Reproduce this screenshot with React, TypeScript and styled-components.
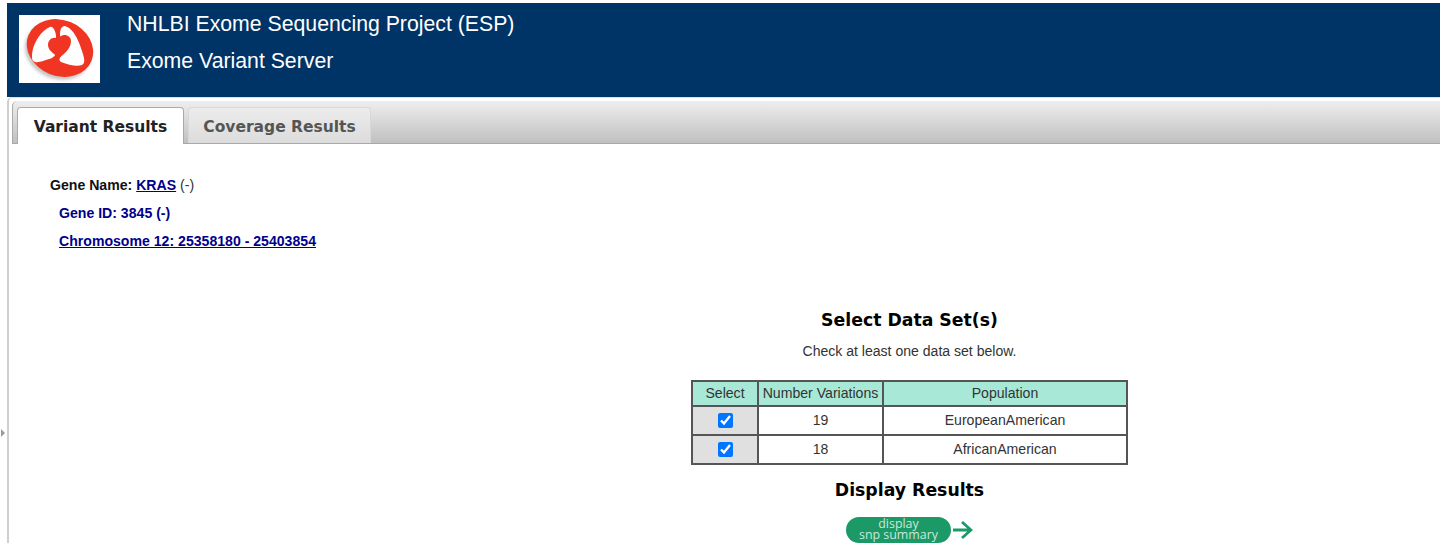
import React from "react"
import styled, {createGlobalStyle} from "styled-components"

const GlobalStyle = createGlobalStyle`
  html, body {
    margin: 0;
    padding: 0;
    height: 543px;
    overflow: hidden;
    background: #ffffff;
    font-family: "Liberation Sans", Arial, sans-serif;
  }
`

const Page = styled.div`
  display: flex;
  flex-direction: row;
  width: 1440px;
  height: 543px;
  overflow: hidden;
`

const Toggler = styled.div`
  width: 7px;
  flex-shrink: 0;
  position: relative;
`

const TogglerArrow = styled.span`
  position: absolute;
  left: 1px;
  top: 429px;
  width: 0;
  height: 0;
  border-top: 4px solid transparent;
  border-bottom: 4px solid transparent;
  border-left: 4px solid #9a9a9a;
`

const Main = styled.div`
  flex: 1;
  min-width: 0;
  display: flex;
  flex-direction: column;
  padding-top: 3px;
`

const Header = styled.header`
  height: 94px;
  background: #003366;
  display: flex;
  flex-direction: row;
  align-items: flex-start;
  flex-shrink: 0;
`

const LogoBox = styled.div`
  width: 81px;
  height: 68px;
  margin: 12px 0 0 12px;
  background: #ffffff;
  flex-shrink: 0;
`

const TitleBlock = styled.div`
  margin-left: 27px;
  padding-top: 8px;
  display: flex;
  flex-direction: column;
  gap: 10px;
`

const Title = styled.div`
  font-size: 21.25px;
  line-height: 27px;
  color: #ffffff;
`

const Pane = styled.div`
  flex: 1;
  border-left: 2px solid #cfcfcf;
  border-top: 1px solid #dddddd;
  border-top-left-radius: 5px;
`

const TabBar = styled.div`
  margin: 3px 0 0 3px;
  height: 43px;
  box-sizing: border-box;
  padding: 6px 0 0 4px;
  display: flex;
  flex-direction: row;
  gap: 4px;
  background: linear-gradient(#eeeeee, #c0c0c0);
  border-left: 1px solid #aaaaaa;
  border-bottom: 1px solid #a8a8a8;
  border-top-left-radius: 5px;
`

const Tab = styled.div<{$active?: boolean}>`
  height: ${p => (p.$active ? "37px" : "36px")};
  box-sizing: border-box;
  padding: 2px 0 0;
  display: flex;
  align-items: center;
  justify-content: center;
  width: ${p => (p.$active ? "167px" : "183px")};
  font-family: "DejaVu Sans", Verdana, sans-serif;
  font-size: 15.5px;
  font-weight: 700;
  color: ${p => (p.$active ? "#222222" : "#555555")};
  background: ${p => (p.$active ? "#ffffff" : "linear-gradient(#ececec, #dcdcdc)")};
  border: 1px solid ${p => (p.$active ? "#aaaaaa" : "#d8d8d8")};
  border-bottom: none;
  border-radius: 4px 4px 0 0;
`

const Content = styled.div`
  display: flex;
  flex-direction: column;
`

const GeneBlock = styled.div`
  padding: 34px 0 0 41px;
  display: flex;
  flex-direction: column;
  gap: 13px;
`

const GeneLine = styled.div<{$indent?: boolean}>`
  font-size: 14.1px;
  line-height: 15px;
  font-weight: 700;
  color: ${p => (p.$indent ? "#00008b" : "#111111")};
  margin-left: ${p => (p.$indent ? "9px" : "0")};
`

const GeneLink = styled.a`
  color: #00008b;
  text-decoration: underline;
`

const Muted = styled.span`
  font-weight: 400;
  color: #333333;
`

const DataSection = styled.section`
  padding: 60px 0 0 370px;
  display: flex;
  flex-direction: column;
  align-items: center;
`

const Heading = styled.h3`
  margin: 0;
  font-family: "DejaVu Sans", Verdana, sans-serif;
  font-size: 17.3px;
  line-height: 22px;
  font-weight: 700;
  color: #000000;
`

const Hint = styled.p`
  margin: 12px 0 21px;
  font-size: 14.05px;
  line-height: 16px;
  color: #333333;
`

const DataTable = styled.table`
  width: 435px;
  border-collapse: collapse;
  border: 2px solid #555555;
  table-layout: fixed;
  font-size: 14.1px;
  color: #333333;
  text-align: center;
`

const HeadCell = styled.th<{$w: number}>`
  box-sizing: border-box;
  width: ${p => p.$w}px;
  height: 25px;
  padding: 0 0 2px;
  font-weight: 400;
  background: #a8e8d6;
  border: 2px solid #555555;
`

const Cell = styled.td<{$shaded?: boolean}>`
  height: 25px;
  padding: 0 0 2px;
  background: ${p => (p.$shaded ? "#e0e0e0" : "#ffffff")};
  border: 2px solid #555555;
`

const Check = styled.input`
  display: block;
  width: 15px;
  height: 15px;
  margin: 2px auto 0;
`

const ResultsHeading = styled(Heading)`
  margin-top: 14px;
`

const DisplayRow = styled.div`
  margin-top: 16px;
  display: flex;
  flex-direction: row;
  align-items: center;
  gap: 2px;
`

const Pill = styled.div`
  width: 105px;
  height: 26px;
  border-radius: 14px;
  background: #1b9a68;
  color: #c9e8da;
  font-family: "Open Sans", sans-serif;
  font-size: 12.4px;
  line-height: 11px;
  text-align: center;
  padding-top: 1px;
  box-sizing: border-box;
`

const rows = [
    {count: 19, population: "EuropeanAmerican"},
    {count: 18, population: "AfricanAmerican"},
]

const LungLogo = () => (
    <svg width="81" height="68" viewBox="0 0 81 68" style={{display: "block"}}>
        <defs>
            <filter id="soft" x="-10%" y="-10%" width="120%" height="130%">
                <feGaussianBlur stdDeviation="1.5"/>
            </filter>
            <filter id="scaled" x="-5%" y="-5%" width="110%" height="110%">
                <feGaussianBlur stdDeviation="0.35"/>
            </filter>
        </defs>
        <ellipse cx="39" cy="36" rx="34" ry="28" fill="#999999" opacity="0.55" filter="url(#soft)" transform="rotate(22 39 36)"/>
        <g filter="url(#scaled)">
            <ellipse cx="41" cy="33" rx="34" ry="28" fill="#f03522" transform="rotate(22 41 33)"/>
            <path d="M31 12 C23 15 13 28 13 42 C13 48 18 48 24 46 C30 44 36 43 37 38 L37 20 C36 15 34 11 31 12 Z" fill="#ffffff"/>
            <path d="M45 11 C42 12 41 15 41 20 L42 41 C40 44 40 46 42 47 C50 50 58 52 63 50 C67 48 65 42 63 36 C60 26 54 12 45 11 Z" fill="#ffffff"/>
            <path d="M39 24 C35 21 29 24 29 30 C29 36 36 39 40 43 C45 39 52 34 52 26 C52 20 43 17 39 24 Z" fill="#f03522"/>
        </g>
    </svg>
)

const NextArrow = () => (
    <svg width="20" height="20" viewBox="0 0 20 20">
        <path d="M0 10 H17 M9 2 L18 10 L9 18" fill="none" stroke="#1b9a68" strokeWidth="2.8"/>
    </svg>
)

export default function App() {
    return (<>
        <GlobalStyle/>
        <Page>
            <Toggler><TogglerArrow/></Toggler>
            <Main>
                <Header>
                    <LogoBox><LungLogo/></LogoBox>
                    <TitleBlock>
                        <Title>NHLBI Exome Sequencing Project (ESP)</Title>
                        <Title>Exome Variant Server</Title>
                    </TitleBlock>
                </Header>
                <Pane>
                    <TabBar>
                        <Tab $active>Variant Results</Tab>
                        <Tab>Coverage Results</Tab>
                    </TabBar>
                    <Content>
                        <GeneBlock>
                            <GeneLine>Gene Name: <GeneLink href="#">KRAS</GeneLink> <Muted>(-)</Muted></GeneLine>
                            <GeneLine $indent>Gene ID: 3845 (-)</GeneLine>
                            <GeneLine $indent><GeneLink href="#">Chromosome 12: 25358180 - 25403854</GeneLink></GeneLine>
                        </GeneBlock>
                        <DataSection>
                            <Heading>Select Data Set(s)</Heading>
                            <Hint>Check at least one data set below.</Hint>
                            <DataTable>
                                <thead>
                                    <tr>
                                        <HeadCell $w={66}>Select</HeadCell>
                                        <HeadCell $w={125}>Number Variations</HeadCell>
                                        <HeadCell $w={244}>Population</HeadCell>
                                    </tr>
                                </thead>
                                <tbody>
                                    {rows.map(r => (
                                        <tr key={r.population}>
                                            <Cell $shaded><Check type="checkbox" defaultChecked/></Cell>
                                            <Cell>{r.count}</Cell>
                                            <Cell>{r.population}</Cell>
                                        </tr>
                                    ))}
                                </tbody>
                            </DataTable>
                            <ResultsHeading>Display Results</ResultsHeading>
                            <DisplayRow>
                                <Pill>display<br/>snp summary</Pill>
                                <NextArrow/>
                            </DisplayRow>
                        </DataSection>
                    </Content>
                </Pane>
            </Main>
        </Page>
    </>)
}
